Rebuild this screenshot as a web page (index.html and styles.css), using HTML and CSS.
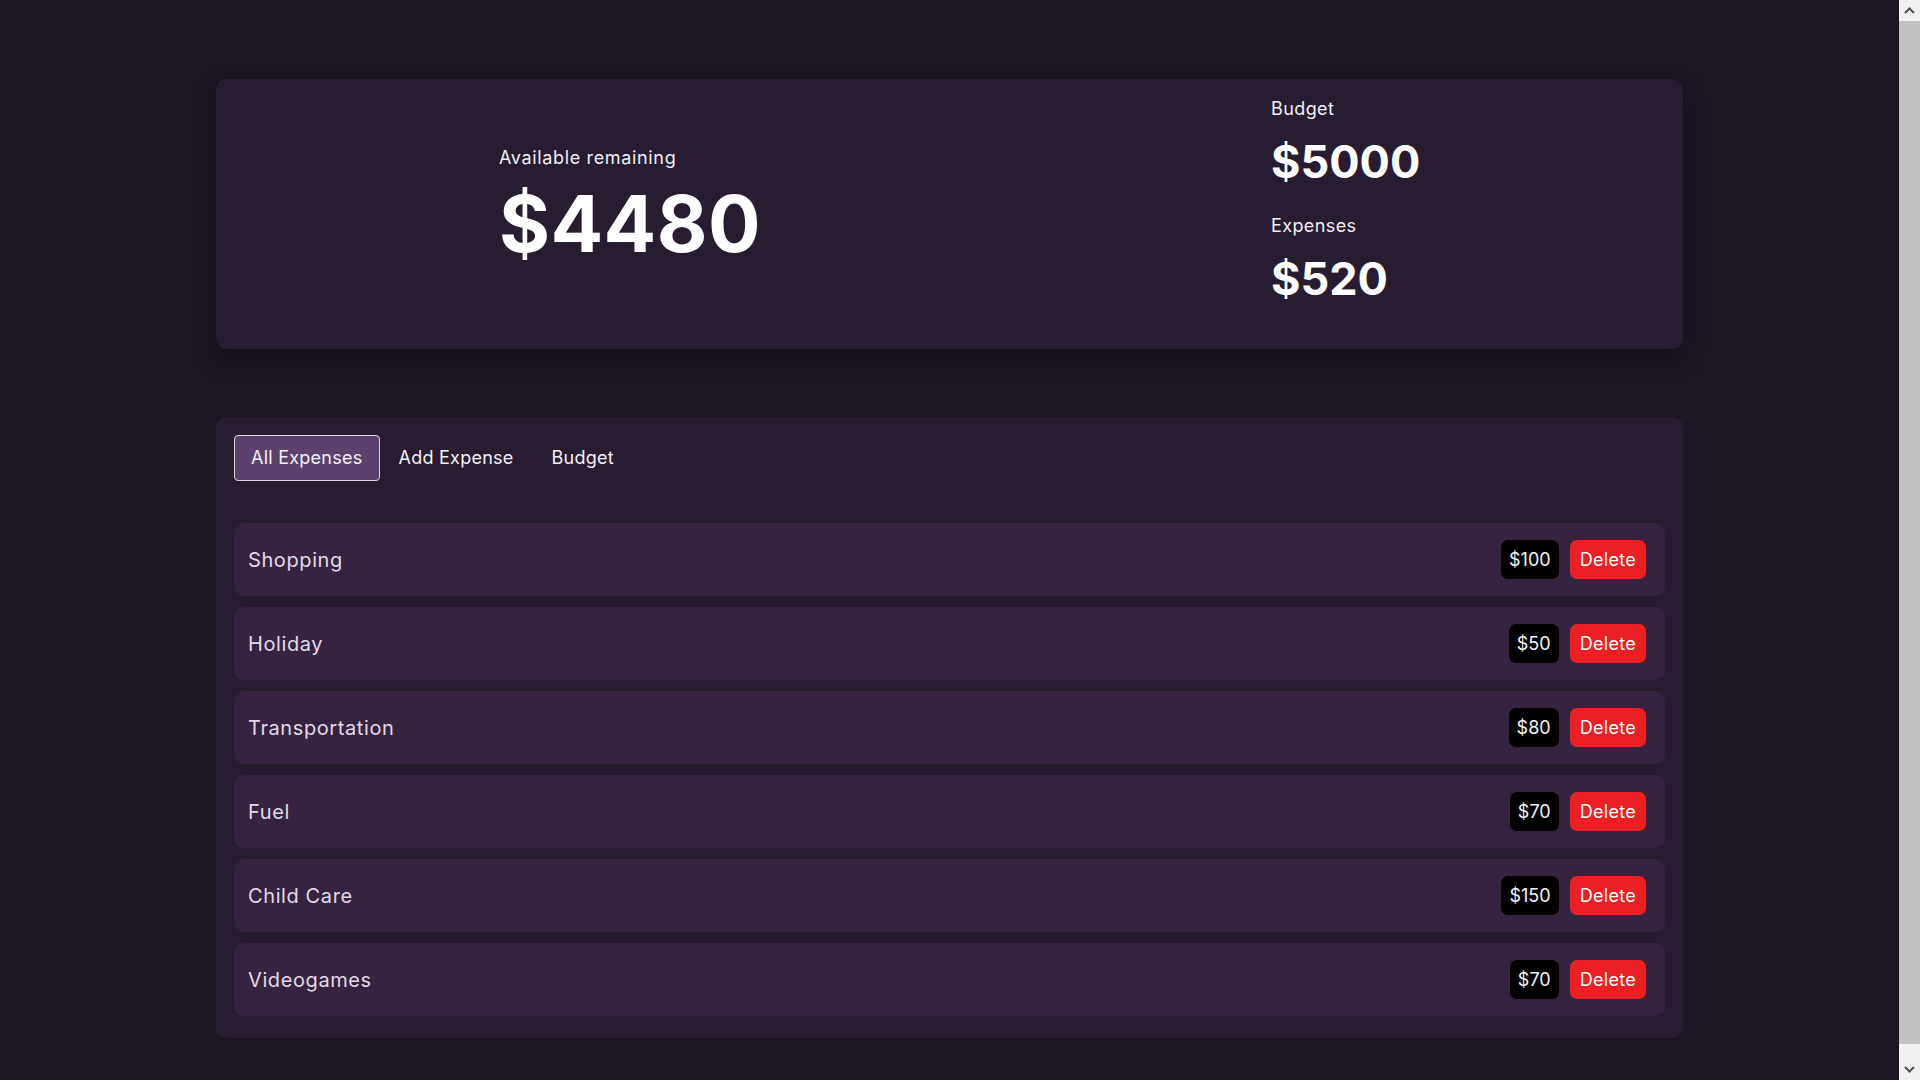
FILE: index.html
```html
<!DOCTYPE html>
<html lang="en">
<head>
<meta charset="utf-8">
<title>Budget Planner</title>
<link rel="stylesheet" href="styles.css">
</head>
<body>
<main class="page">
  <section class="summary card">
    <div class="available">
      <div class="label">Available remaining</div>
      <div class="big-amount">$4480</div>
    </div>
    <div class="totals">
      <div class="label">Budget</div>
      <div class="amount">$5000</div>
      <div class="label">Expenses</div>
      <div class="amount last">$520</div>
    </div>
  </section>

  <section class="expenses card">
    <nav class="tabs">
      <button class="tab active">All Expenses</button>
      <button class="tab">Add Expense</button>
      <button class="tab">Budget</button>
    </nav>
    <ul class="list">
      <li class="item"><span class="name">Shopping</span><span class="actions"><span class="cost">$100</span><button class="delete">Delete</button></span></li>
      <li class="item"><span class="name">Holiday</span><span class="actions"><span class="cost">$50</span><button class="delete">Delete</button></span></li>
      <li class="item"><span class="name">Transportation</span><span class="actions"><span class="cost">$80</span><button class="delete">Delete</button></span></li>
      <li class="item"><span class="name">Fuel</span><span class="actions"><span class="cost">$70</span><button class="delete">Delete</button></span></li>
      <li class="item"><span class="name">Child Care</span><span class="actions"><span class="cost">$150</span><button class="delete">Delete</button></span></li>
      <li class="item"><span class="name">Videogames</span><span class="actions"><span class="cost">$70</span><button class="delete">Delete</button></span></li>
    </ul>
  </section>
</main>

<div class="scrollbar" aria-hidden="true">
  <div class="sb-btn">
    <svg width="11" height="7" viewBox="0 0 11 7"><path d="M1 6 L5.5 1.5 L10 6" fill="none" stroke="#505050" stroke-width="2"/></svg>
  </div>
  <div class="sb-track"><div class="sb-thumb"></div></div>
  <div class="sb-btn">
    <svg width="11" height="7" viewBox="0 0 11 7"><path d="M1 1 L5.5 5.5 L10 1" fill="none" stroke="#505050" stroke-width="2"/></svg>
  </div>
</div>
</body>
</html>
```
FILE: styles.css
```css
* { box-sizing: border-box; }

html, body {
  margin: 0;
  padding: 0;
  background: #1c1522;
  color: #f2eef5;
  font-family: "Inter", "Open Sans", sans-serif;
}

.page {
  width: 1467px;
  margin-left: 216px;
  padding-top: 79px;
  padding-bottom: 67px;
}

.card {
  background: #271c30;
  border-radius: 11px;
  box-shadow: 0 10px 22px rgba(0, 0, 0, 0.28);
}

/* summary */
.summary {
  height: 270px;
  display: grid;
  grid-template-columns: 772px 1fr;
  padding-left: 283px;
  padding-top: 16px;
}

.label {
  font-size: 18px;
  line-height: 27px;
  letter-spacing: 0.4px;
  color: #f3eff6;
}

.available .label {
  letter-spacing: 0.65px;
}

.available {
  padding-top: 49px;
}

.big-amount {
  font-size: 78px;
  font-weight: 700;
  line-height: 94px;
  margin-top: 6px;
  color: #ffffff;
  letter-spacing: 0.4px;
}

.amount {
  font-size: 45px;
  font-weight: 700;
  line-height: 55px;
  margin-top: 12px;
  margin-bottom: 23px;
  color: #ffffff;
}

.amount.last { margin-bottom: 0; }

/* expenses */
.expenses {
  margin-top: 68px;
  padding: 18px 18px 22px;
  border-radius: 10px;
  box-shadow: none;
}

.tabs {
  display: flex;
  margin-bottom: 42px;
}

.tab {
  font-family: inherit;
  font-size: 18px;
  line-height: 26px;
  padding: 9px 18px;
  border: 1px solid transparent;
  border-radius: 4px;
  background: transparent;
  color: #f4f0f7;
  letter-spacing: 0.25px;
}

.tab.active {
  background: #5c416c;
  border-color: #dcd4e0;
  padding: 9px 16px;
}

.list {
  list-style: none;
  margin: 0;
  padding: 0;
  display: flex;
  flex-direction: column;
  gap: 11px;
}

.item {
  height: 73px;
  background: #35233f;
  border-radius: 10px;
  display: flex;
  align-items: center;
  justify-content: space-between;
  padding: 0 19px 0 14px;
}

.name {
  font-size: 20px;
  letter-spacing: 0.6px;
  color: #e2dae8;
}

.actions {
  display: flex;
  align-items: center;
  gap: 11px;
}

.cost {
  background: #000000;
  color: #f4f4f4;
  font-size: 18px;
  line-height: 39px;
  height: 39px;
  padding: 0 8px;
  border-radius: 7px;
}

.delete {
  font-family: inherit;
  background: #ec1f24;
  color: #ffffff;
  font-size: 18px;
  line-height: 39px;
  height: 39px;
  padding: 0 10px;
  border: none;
  border-radius: 7px;
  letter-spacing: 0.3px;
}

/* browser scrollbar look-alike */
.scrollbar {
  position: fixed;
  top: 0;
  right: 0;
  width: 21px;
  height: 100vh;
  background: #f1f1f1;
  display: flex;
  flex-direction: column;
}

.sb-btn {
  height: 21px;
  display: flex;
  align-items: center;
  justify-content: center;
  flex: none;
}

.sb-track {
  flex: 1;
  padding-bottom: 15px;
}

.sb-thumb {
  height: 100%;
  background: #c1c1c1;
}
```
